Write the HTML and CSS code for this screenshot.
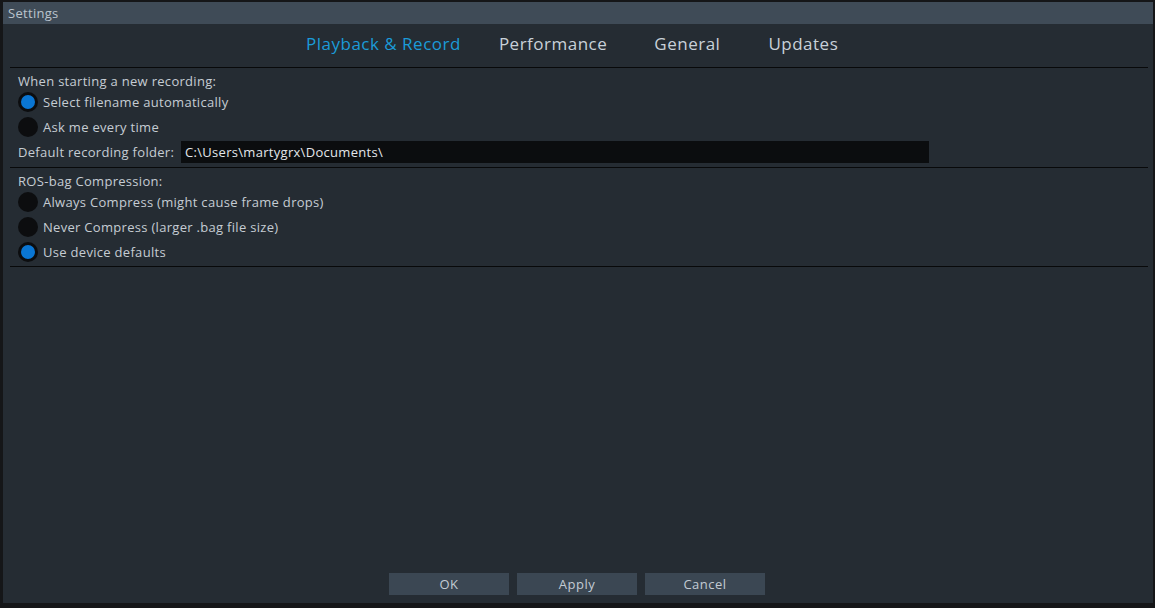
FILE: index.html
```html
<!DOCTYPE html>
<html>

<head>
  <meta charset="UTF-8">
  <meta name="viewport" content="width=device-width, initial-scale=1.0">
  <title>Settings</title>
  <link rel="stylesheet" href="styles.css">
</head>

<body>
  <div class="window">
    <div class="title-bar">Settings</div>

    <div class="main">
      <nav class="tabs">
        <span class="tab tab-active">Playback &amp; Record</span>
        <span class="tab tab-2">Performance</span>
        <span class="tab tab-3">General</span>
        <span class="tab tab-4">Updates</span>
      </nav>

      <section class="group">
        <div class="group-label">When starting a new recording:</div>
        <label class="radio-row">
          <span class="radio radio-on"></span>
          <span>Select filename automatically</span>
        </label>
        <label class="radio-row">
          <span class="radio"></span>
          <span>Ask me every time</span>
        </label>
        <div class="folder-row">
          <span class="folder-label">Default recording folder:</span>
          <span class="folder-input">C:\Users\martygrx\Documents\</span>
        </div>
      </section>

      <section class="group">
        <div class="group-label">ROS-bag Compression:</div>
        <label class="radio-row">
          <span class="radio"></span>
          <span>Always Compress (might cause frame drops)</span>
        </label>
        <label class="radio-row">
          <span class="radio"></span>
          <span>Never Compress (larger .bag file size)</span>
        </label>
        <label class="radio-row">
          <span class="radio radio-on"></span>
          <span>Use device defaults</span>
        </label>
      </section>
    </div>

    <div class="buttons">
      <button class="btn">OK</button>
      <button class="btn">Apply</button>
      <button class="btn">Cancel</button>
    </div>
  </div>
</body>

</html>
```

FILE: styles.css
```css
html,
body {
  margin: 0;
  height: 608px;
  background: #151618;
  overflow: hidden;
}

body {
  font-family: "Open Sans", "Noto Sans", sans-serif;
  font-size: 13px;
  letter-spacing: 0.3px;
  color: #c5ccd3;
}

.window {
  display: flex;
  flex-direction: column;
  width: 1150px;
  height: 601px;
  margin: 2px 2px 0 3px;
  background: #252c33;
}

.title-bar {
  height: 22px;
  line-height: 22px;
  padding-left: 5px;
  background: #3f4b57;
  color: #bac4cd;
}

.main {
  flex: 1;
  padding: 0 5px 0 7px;
}

.tabs {
  display: flex;
  align-items: center;
  box-sizing: border-box;
  height: 44px;
  padding: 0 0 4px 296px;
  border-bottom: 1px solid #08090a;
  font-size: 17px;
  letter-spacing: 0.5px;
  color: #c9d1d9;
}

.tab {
  white-space: nowrap;
  cursor: pointer;
}

.tab-active {
  color: #1b9bd8;
}

.tab-2 {
  margin-left: 38px;
}

.tab-3 {
  margin-left: 47px;
}

.tab-4 {
  margin-left: 48px;
}

.group {
  display: flex;
  flex-direction: column;
  padding: 3px 0 4px;
  border-bottom: 1px solid #08090a;
}

.group-label {
  height: 21px;
  line-height: 21px;
  padding-left: 8px;
}

.radio-row {
  display: flex;
  align-items: center;
  gap: 5px;
  height: 20px;
  padding-left: 8px;
}

.radio-row + .radio-row {
  margin-top: 5px;
}

.radio {
  box-sizing: border-box;
  flex: none;
  width: 20px;
  height: 20px;
  border-radius: 50%;
  background: #0c0d0f;
}

.radio-on {
  border: 3px solid #0c0d0f;
  background: #0a76d3;
}

.folder-row {
  display: flex;
  align-items: center;
  height: 22px;
  margin-top: 4px;
  padding-left: 8px;
}

.folder-label {
  width: 163px;
}

.folder-input {
  width: 744px;
  height: 22px;
  line-height: 22px;
  padding-left: 4px;
  background: #0b0d0f;
  color: #e3e7eb;
}

.buttons {
  display: flex;
  justify-content: center;
  gap: 8px;
  padding: 0 2px 8px 0;
}

.btn {
  width: 120px;
  height: 22px;
  padding: 0;
  border: none;
  background: #3b4753;
  color: #c3cbd3;
  font: inherit;
  letter-spacing: 0.5px;
}
```
